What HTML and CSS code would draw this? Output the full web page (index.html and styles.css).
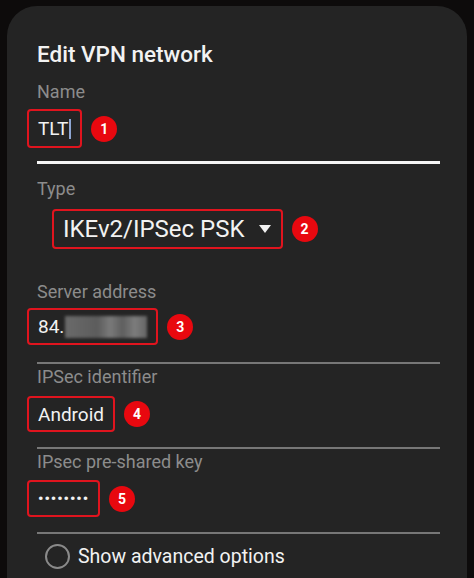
FILE: index.html
```html
<!DOCTYPE html>
<html lang="en">
<head>
    <meta charset="UTF-8">
    <meta name="viewport" content="width=device-width, initial-scale=1.0">
    <title>Edit VPN network</title>
    <link rel="stylesheet" href="styles.css">
</head>
<body>

<div class="dialog">
    <h1 class="title">Edit VPN network</h1>

    <!-- Name -->
    <div class="field field-name">
        <div class="label">Name</div>
        <div class="row">
            <div class="box">TLT<span class="cursor"></span></div>
            <span class="badge">1</span>
        </div>
        <div class="underline active"></div>
    </div>

    <!-- Type -->
    <div class="field field-type">
        <div class="label">Type</div>
        <div class="row">
            <div class="box select">IKEv2/IPSec PSK <span class="arrow"></span></div>
            <span class="badge">2</span>
        </div>
    </div>

    <!-- Server address -->
    <div class="field field-server">
        <div class="label">Server address</div>
        <div class="row">
            <div class="box">84.<span class="blur"></span></div>
            <span class="badge">3</span>
        </div>
        <div class="underline"></div>
    </div>

    <!-- IPSec identifier -->
    <div class="field field-ident">
        <div class="label">IPSec identifier</div>
        <div class="row">
            <div class="box">Android</div>
            <span class="badge">4</span>
        </div>
        <div class="underline"></div>
    </div>

    <!-- Pre-shared key -->
    <div class="field field-key">
        <div class="label">IPsec pre-shared key</div>
        <div class="row">
            <div class="box dots">••••••••</div>
            <span class="badge">5</span>
        </div>
        <div class="underline"></div>
    </div>

    <label class="check">
        <span class="radio"></span>
        Show advanced options
    </label>
</div>

</body>
</html>
```

FILE: styles.css
```css
body {
    margin: 0;
    padding: 0;
    background-color: #0d0b0b;
    font-family: Roboto, "Noto Sans", Arial, sans-serif;
    height: 578px;
    overflow: hidden;
}

.dialog {
    margin: 6px 7px 0 7px;
    height: 572px;
    box-sizing: border-box;
    background-color: #242424;
    border-radius: 30px 30px 0 0;
    padding: 34px 27px 0 20px;
}

.title {
    margin: 0 0 0 10px;
    font-size: 22.5px;
    line-height: 28px;
    font-weight: 500;
    color: #f2f2f2;
}

.label {
    padding-left: 10px;
    font-size: 18px;
    line-height: 22px;
    color: #8c8c8c;
}

.row {
    display: flex;
    align-items: center;
    gap: 9px;
}

.box {
    display: flex;
    align-items: center;
    height: 35px;
    padding: 0 9px;
    border: 2px solid #e0141e;
    border-radius: 4px;
    font-size: 19px;
    color: #f2f2f2;
}

.cursor {
    display: inline-block;
    width: 2px;
    height: 20px;
    margin-left: 1px;
    background-color: #8ea6d4;
}

.blur {
    display: inline-block;
    width: 82px;
    height: 22px;
    margin-left: 1px;
    background: linear-gradient(90deg, #6a6a6a 0%, #5c5c5c 40%, #7a7a7a 55%, #5e5e5e 70%, #7c7c7c 85%, #666 100%);
    filter: blur(1.5px);
}

.select {
    height: 36px;
    margin-left: 25px;
    padding: 0 10px 0 9px;
    font-size: 24px;
    gap: 14px;
}

.arrow {
    width: 0;
    height: 0;
    border-left: 6px solid transparent;
    border-right: 6px solid transparent;
    border-top: 8px solid #f2f2f2;
}

.dots {
    font-size: 15px;
    letter-spacing: 1px;
    font-weight: bold;
}

.badge {
    width: 26px;
    height: 26px;
    border-radius: 50%;
    background-color: #e8080f;
    color: #fff;
    font-size: 14px;
    font-weight: bold;
    display: flex;
    align-items: center;
    justify-content: center;
}

.underline {
    margin-left: 10px;
    height: 2px;
    background-color: #777;
}

.underline.active {
    height: 3px;
    background-color: #f5f5f5;
}

.field-name { margin-top: 13px; }
.field-name .row { margin-top: 6px; }
.field-name .underline { margin-top: 13px; }

.field-type { margin-top: 14px; }
.field-type .row { margin-top: 9px; }

.field-server { margin-top: 32px; }
.field-server .row { margin-top: 5px; }
.field-server .box { height: 33px; }
.field-server .underline { margin-top: 17px; }

.field-ident { margin-top: 2px; }
.field-ident .row { margin-top: 8px; }
.field-ident .box { height: 32px; }
.field-ident .underline { margin-top: 15px; }

.field-key { margin-top: 2px; }
.field-key .row { margin-top: 7px; }
.field-key .box { height: 33px; }
.field-key .underline { margin-top: 15px; }

.check {
    display: flex;
    align-items: center;
    gap: 8px;
    margin: 10px 0 0 18px;
    font-size: 19.5px;
    color: #f2f2f2;
}

.radio {
    width: 21px;
    height: 21px;
    border: 2px solid #8a8a8a;
    border-radius: 50%;
}
```
